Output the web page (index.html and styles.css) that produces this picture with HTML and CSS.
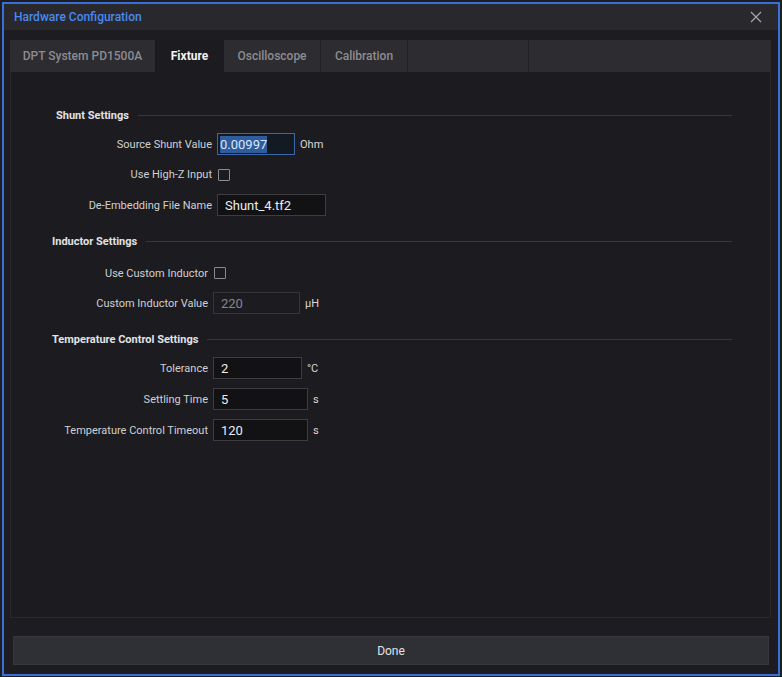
FILE: index.html
```html
<!DOCTYPE html>
<html lang="en">
<head>
    <meta charset="UTF-8">
    <meta name="viewport" content="width=device-width, initial-scale=1.0">
    <title>Hardware Configuration</title>
    <link rel="stylesheet" href="styles.css">
</head>
<body>
    <div class="dialog">
        <div class="titlebar">
            <span class="title">Hardware Configuration</span>
            <button class="close" type="button" aria-label="Close">
                <svg width="12" height="12" viewBox="0 0 12 12"><path d="M1 1L11 11M11 1L1 11" stroke="#a8a8ac" stroke-width="1.2" fill="none"/></svg>
            </button>
        </div>
        <div class="body">
            <div class="tabs">
                <div class="tab w-dpt">DPT System PD1500A</div>
                <div class="tab active w-fix">Fixture</div>
                <div class="tab w-osc">Oscilloscope</div>
                <div class="tab w-cal">Calibration</div>
                <div class="tab w-blank"></div>
            </div>
            <div class="panel">
                <!-- Shunt -->
                <section class="group group-shunt">
                    <div class="group-head"><span>Shunt Settings</span></div>
                    <div class="form gap-shunt">
                        <label>Source Shunt Value</label>
                        <div class="field">
                            <div class="input focused w-78"><span class="sel">0.00997</span></div>
                            <span class="unit">Ohm</span>
                        </div>
                        <label>Use High-Z Input</label>
                        <div class="field"><span class="check"></span></div>
                        <label>De-Embedding File Name</label>
                        <div class="field">
                            <input class="input w-109" type="text" value="Shunt_4.tf2">
                        </div>
                    </div>
                </section>

                <!-- Inductor -->
                <section class="group group-inductor">
                    <div class="group-head"><span>Inductor Settings</span></div>
                    <div class="form gap-ind">
                        <label>Use Custom Inductor</label>
                        <div class="field"><span class="check"></span></div>
                        <label>Custom Inductor Value</label>
                        <div class="field">
                            <input class="input w-87" type="text" value="220" disabled>
                            <span class="unit">μH</span>
                        </div>
                    </div>
                </section>

                <!-- Temperature -->
                <section class="group group-temp">
                    <div class="group-head"><span>Temperature Control Settings</span></div>
                    <div class="form gap-temp">
                        <label>Tolerance</label>
                        <div class="field">
                            <input class="input w-89" type="text" value="2">
                            <span class="unit">°C</span>
                        </div>
                        <label>Settling Time</label>
                        <div class="field">
                            <input class="input w-95" type="text" value="5">
                            <span class="unit">s</span>
                        </div>
                        <label>Temperature Control Timeout</label>
                        <div class="field">
                            <input class="input w-95" type="text" value="120">
                            <span class="unit">s</span>
                        </div>
                    </div>
                </section>
            </div>
            <button class="done" type="button">Done</button>
        </div>
    </div>
</body>
</html>
```

FILE: styles.css
```css
* {
    box-sizing: border-box;
}

body {
    margin: 0;
    background-color: #1e1e22;
    font-family: Roboto, "Liberation Sans", Arial, sans-serif;
    color: #d0d0d2;
}

.dialog {
    margin: 2px 0 0 2px;
    width: 778px;
    height: 674px;
    border: 2px solid #3a6fd8;
    background-color: #1d1d21;
    display: flex;
    flex-direction: column;
}

.titlebar {
    height: 26px;
    flex: none;
    background-color: #28282d;
    display: flex;
    align-items: center;
    justify-content: space-between;
    padding: 0 16px 0 10px;
}

.title {
    color: #4a8af0;
    font-size: 12px;
    font-weight: 500;
}

.close {
    background: none;
    border: none;
    padding: 0;
    margin: 0;
    width: 12px;
    height: 12px;
    display: flex;
    cursor: pointer;
}

.body {
    flex: 1;
    display: flex;
    flex-direction: column;
    padding: 10px 7px 9px 6px;
}

.tabs {
    display: flex;
    height: 32px;
    flex: none;
    background-color: #2c2c31;
}

.tab {
    display: flex;
    align-items: center;
    justify-content: center;
    font-size: 12px;
    font-weight: 500;
    color: #8c8c90;
    border-right: 1px solid #222226;
}

.tab.active {
    background-color: #1c1c20;
    color: #f2f2f2;
    font-weight: 700;
    border-right: none;
}

.w-dpt { width: 145px; border-right: none; }
.w-fix { width: 69px; }
.w-osc { width: 97px; }
.w-cal { width: 87px; }
.w-blank { width: 121px; }

.panel {
    flex: 1;
    background-color: #1c1c20;
    border: 1px solid #29292d;
    border-top: none;
    padding: 36px 38px 0 41px;
}

.group-head {
    display: flex;
    align-items: center;
    height: 14px;
    font-size: 11px;
    font-weight: 700;
    color: #e2e2e4;
}

.group-head::after {
    content: "";
    flex: 1;
    height: 1px;
    margin-left: 9px;
    background-color: #37373c;
}

.group-shunt {
    padding-left: 4px;
}

.group-inductor {
    margin-top: 18px;
}

.group-temp {
    margin-top: 18px;
}

.form {
    display: grid;
    grid-template-columns: 156px auto;
    grid-auto-rows: 22px;
    column-gap: 5px;
    margin-top: 11px;
}

.gap-shunt { row-gap: 8.5px; }
.gap-ind { row-gap: 8px; margin-top: 14px; }
.gap-temp { row-gap: 9px; }

.form label {
    font-size: 11px;
    color: #d0d0d2;
    text-align: right;
    align-self: center;
    white-space: nowrap;
}

.field {
    display: flex;
    align-items: center;
}

.input {
    height: 22px;
    border: 1px solid #3c3c41;
    background-color: #121215;
    color: #ececee;
    font-family: inherit;
    font-size: 13px;
    padding: 0 7px;
    outline: none;
    display: flex;
    align-items: center;
}

.input:disabled {
    background-color: #1c1c20;
    border-color: #35353a;
    color: #86868a;
}

.input.focused {
    border-color: #3d68a8;
    background-color: #141a24;
    padding-left: 2px;
}

.sel {
    background-color: #2f5c9a;
    color: #d8e6ff;
    padding: 1px 0 1px 0;
    line-height: 15px;
}

.w-78 { width: 78px; }
.w-87 { width: 87px; }
.w-89 { width: 89px; }
.w-95 { width: 95px; }
.w-109 { width: 109px; }

.unit {
    margin-left: 5px;
    font-size: 11px;
    color: #d8d8da;
}

.check {
    width: 12px;
    height: 12px;
    border: 1px solid #8a8a8e;
    border-radius: 1px;
    margin-left: 1px;
}

.done {
    flex: none;
    margin: 18px 2px 0 3px;
    height: 29px;
    background-color: #2f3036;
    border: 1px solid #36373c;
    color: #e2e2e4;
    font-family: inherit;
    font-size: 12px;
    cursor: pointer;
}

.done:hover {
    background-color: #36373d;
}
```
